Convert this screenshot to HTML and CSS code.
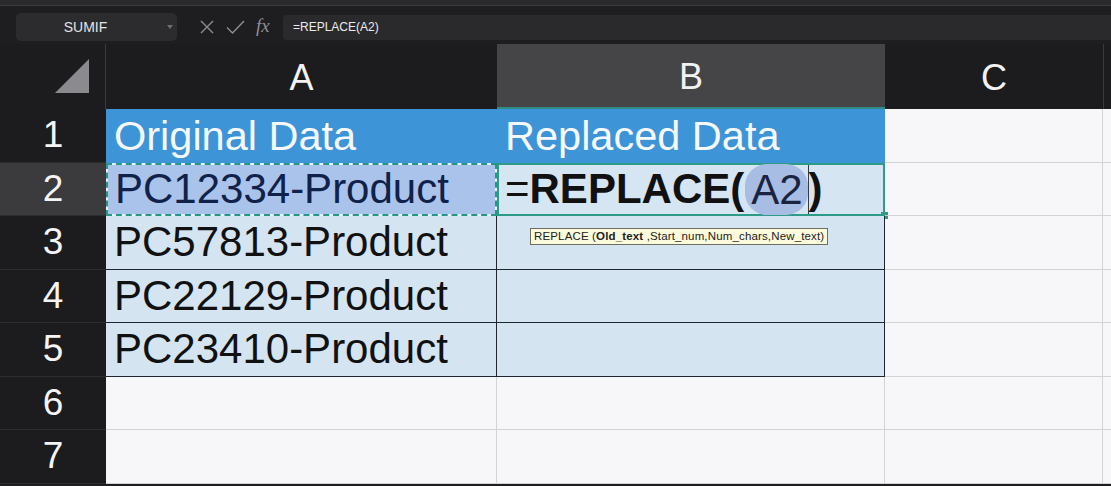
FILE: index.html
```html
<!DOCTYPE html>
<html lang="en">
<head>
    <meta charset="UTF-8">
    <meta name="viewport" content="width=device-width, initial-scale=1.0">
    <title>REPLACE</title>
    <link rel="stylesheet" href="styles.css">
</head>
<body>
    <div class="titlebar"></div>
    <div class="formula-bar">
        <div class="name-box">
            <span class="name">SUMIF</span>
            <span class="drop"></span>
        </div>
        <div class="bar-icons">
            <svg width="16" height="16" viewBox="0 0 16 16"><path d="M2 2L14 14M14 2L2 14" stroke="#8f8e93" stroke-width="1.4" fill="none"/></svg>
            <svg width="19" height="16" viewBox="0 0 19 16"><path d="M1 8.5L6.5 14L18 2" stroke="#8f8e93" stroke-width="1.4" fill="none"/></svg>
            <span class="fx">fx</span>
        </div>
        <div class="formula-input">=REPLACE(A2)</div>
    </div>

    <div class="sheet">
        <div class="corner">
            <svg width="34" height="34" viewBox="0 0 34 34"><path d="M34 0V34H0Z" fill="#8b8a8e"/></svg>
        </div>
        <div class="col-head">A</div>
        <div class="col-head selected">B</div>
        <div class="col-head">C</div>
        <div class="col-head last"></div>

        <div class="row-head">1</div>
        <div class="cell title">Original Data</div>
        <div class="cell title">Replaced Data</div>
        <div class="cell"></div>
        <div class="cell last"></div>

        <div class="row-head selected">2</div>
        <div class="cell copied">PC12334-Product</div>
        <div class="cell active">
            <span>=</span><b>REPLACE(</b><span class="ref">A2</span><span class="caret"></span><b>)</b>
            <span class="fill-handle"></span>
        </div>
        <div class="cell"></div>
        <div class="cell last"></div>

        <div class="row-head">3</div>
        <div class="cell data">PC57813-Product</div>
        <div class="cell data">
            <div class="tip">REPLACE (<b>Old_text</b> ,Start_num,Num_chars,New_text)</div>
        </div>
        <div class="cell"></div>
        <div class="cell last"></div>

        <div class="row-head">4</div>
        <div class="cell data">PC22129-Product</div>
        <div class="cell data"></div>
        <div class="cell"></div>
        <div class="cell last"></div>

        <div class="row-head">5</div>
        <div class="cell data">PC23410-Product</div>
        <div class="cell data"></div>
        <div class="cell"></div>
        <div class="cell last"></div>

        <div class="row-head">6</div>
        <div class="cell"></div>
        <div class="cell"></div>
        <div class="cell"></div>
        <div class="cell last"></div>

        <div class="row-head">7</div>
        <div class="cell"></div>
        <div class="cell"></div>
        <div class="cell"></div>
        <div class="cell last"></div>
    </div>
</body>
</html>
```

FILE: styles.css
```css
body {
    margin: 0;
    background-color: #1e1d20;
    font-family: "Liberation Sans", Arial, sans-serif;
    overflow: hidden;
}

.titlebar {
    height: 5px;
    background-color: #2b2a2d;
    border-bottom: 1px solid #3b3a3d;
}

.formula-bar {
    height: 38px;
    display: flex;
    align-items: center;
    padding: 4px 0 0 16px;
    box-sizing: border-box;
}

.name-box {
    width: 161px;
    height: 28px;
    background-color: #2c2b2e;
    border-radius: 5px;
    display: flex;
    align-items: center;
}

.name-box .name {
    flex: 1;
    text-align: center;
    color: #e4e4e6;
    font-size: 14px;
    padding-right: 12px;
}

.name-box .drop {
    width: 0;
    height: 0;
    border-left: 3px solid transparent;
    border-right: 3px solid transparent;
    border-top: 4px solid #6f6e72;
    margin-right: 4px;
}

.bar-icons {
    display: flex;
    align-items: center;
    gap: 11px;
    margin-left: 22px;
    width: 84px;
}

.fx {
    font-family: "Liberation Serif", serif;
    font-style: italic;
    font-size: 19px;
    color: #8f8e93;
    margin-top: -2px;
}

.formula-input {
    flex: 1;
    height: 25px;
    background-color: #2a292c;
    border-radius: 4px 0 0 4px;
    color: #ececee;
    font-size: 12px;
    line-height: 25px;
    padding-left: 10px;
}

.sheet {
    display: grid;
    grid-template-columns: 106px 391px 388px 218px 1fr;
    grid-template-rows: 65px repeat(7, 53.5px);
    background-color: #f7f6f9;
}

.corner {
    background-color: #1c1b1e;
    border-right: 1px solid #3a393c;
    display: flex;
    justify-content: flex-end;
    align-items: flex-end;
    padding: 0 16px 16px 0;
    box-sizing: border-box;
}

.col-head {
    background-color: #1c1b1e;
    color: #f2f2f2;
    font-size: 36px;
    display: flex;
    align-items: center;
    justify-content: center;
    padding-top: 2px;
    box-sizing: border-box;
}

.col-head.selected {
    background-color: #454447;
    border-bottom: 2px solid #2f8d88;
}

.col-head.last {
    border-left: 1px solid #3a393c;
}

.row-head {
    background-color: #1c1b1e;
    color: #f4f4f4;
    font-size: 37px;
    display: flex;
    align-items: center;
    justify-content: center;
    border-bottom: 1px solid #2d2c2f;
    box-sizing: border-box;
}

.row-head.selected {
    background-color: #3b3a3d;
}

.cell {
    border-right: 1px solid #d3d2d6;
    border-bottom: 1px solid #d3d2d6;
    box-sizing: border-box;
    font-size: 42px;
    color: #111;
    display: flex;
    align-items: center;
    padding-left: 8px;
    white-space: nowrap;
    position: relative;
}

.cell.last {
    border-right: none;
}

.cell.title {
    background-color: #3d94d6;
    color: #f6f9fc;
    border-color: #3d94d6;
    font-size: 41.5px;
    padding-top: 2px;
}

.cell.data {
    background-color: #d4e4f1;
    border-right-color: #1f2630;
    border-bottom-color: #1f2630;
}

.cell.copied {
    border: 2px dashed #27968a;
    background: linear-gradient(#aac3eb, #aac3eb) padding-box, #e8f3f6 border-box;
    color: #10214a;
    padding-left: 7px;
}

.cell.active {
    background-color: #d5e5f1;
    border: 2px solid #2e9a88;
    align-items: stretch;
    padding-left: 6px;
}

.cell.active > span,
.cell.active > b {
    align-self: center;
}

.ref {
    background-color: #a8bde3;
    color: #1a2340;
    border-radius: 22px;
    padding: 2px 5px 1px 6px;
    margin-left: 1px;
}

.cell.active > .caret {
    align-self: stretch;
    border-left: 1px solid #3c3c40;
}

.fill-handle {
    position: absolute;
    right: -5px;
    bottom: -5px;
    width: 7px;
    height: 7px;
    background-color: #2e9a88;
}

.tip {
    position: absolute;
    left: 33px;
    top: 12px;
    height: 17px;
    box-sizing: border-box;
    padding: 0 3px;
    background-color: #fcfadc;
    border: 1px solid #6e6d60;
    font-size: 11.5px;
    letter-spacing: 0.15px;
    line-height: 15px;
    color: #222;
}
```
